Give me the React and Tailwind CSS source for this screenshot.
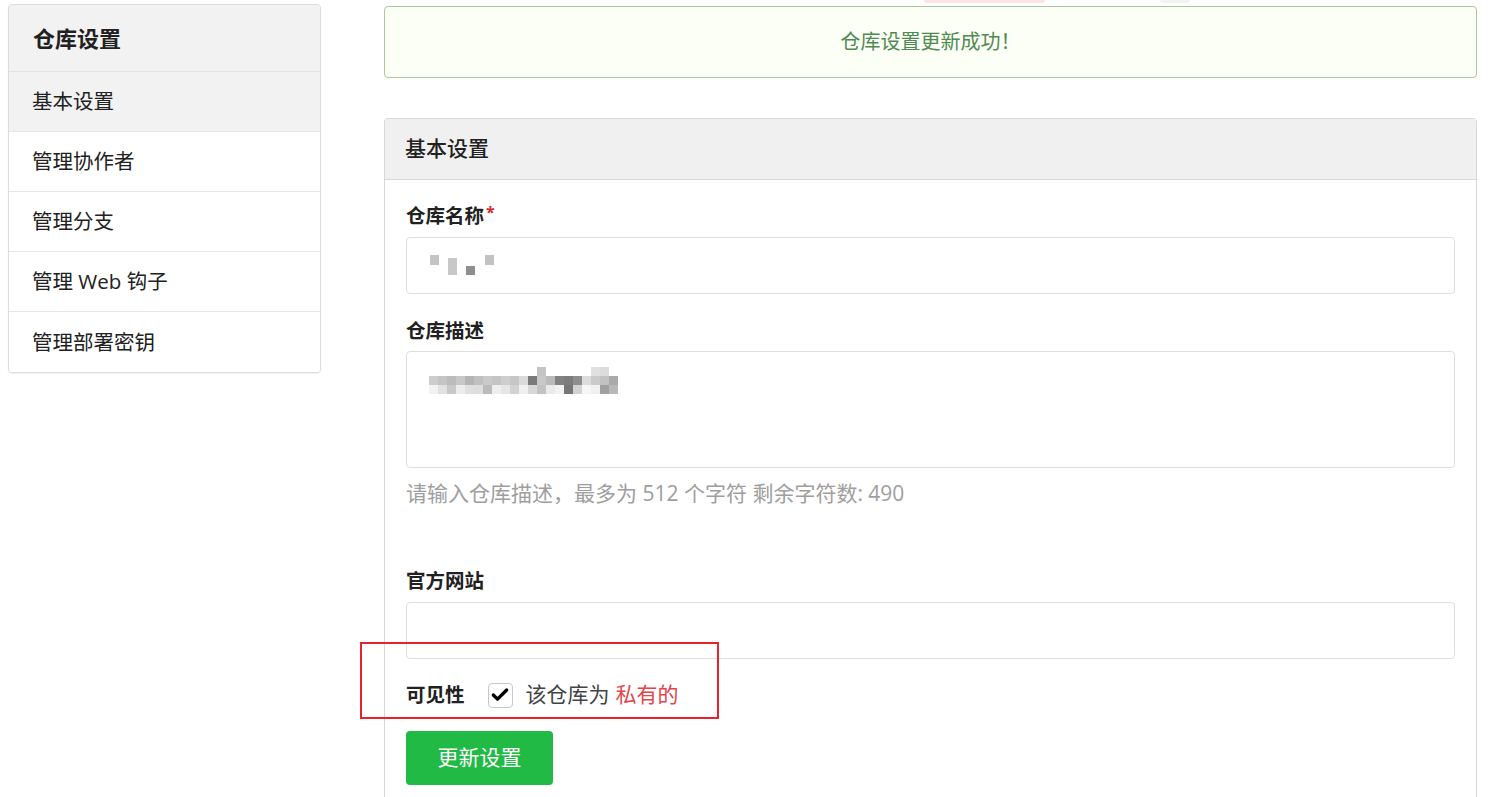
import { Check } from 'lucide-react';

const font = "font-['Open_Sans','Noto_Sans_CJK_SC',sans-serif]";

const navItems = ['基本设置', '管理协作者', '管理分支', '管理 Web 钩子', '管理部署密钥'];

// blurred (mosaic) text inside the description box, 9px cells
const descRows = [
  ['', '', '', '', '', '', '', '', '', '', '', '', 'c4', '', '', '', '', '', 'e0', 'dc', ''],
  ['cdcdcd', 'c4c4c4', 'bcbcbc', 'c8c8c8', 'b4b4b4', 'c0c0c0', 'cacaca', 'c4c4c4', 'cecece', 'c6c6c6', 'dadada', '7a7a7a', 'c8c8c8', 'bababa', '828282', '7c7c7c', '8e8e8e', 'dcdcdc', 'cacaca', 'c2c2c2', 'aaaaaa'],
  ['f2f2f2', 'e2e2e2', 'c8c8c8', 'ececec', 'e0e0e0', 'dedede', 'bababa', 'eeeeee', 'e6e6e6', 'd2d2d2', 'f0f0f0', 'd8d8d8', 'c2c2c2', 'eaeaea', 'f2f2f2', '767676', 'd2d2d2', 'f6f6f6', 'f0f0f0', 'a0a0a0', 'b8b8b8'],
];

function Mosaic({ rows }) {
  return (
    <div className="flex flex-col">
      {rows.map((row, i) => (
        <div key={i} className="flex">
          {row.map((c, j) => (
            <div
              key={j}
              className="w-[9px] h-[9px]"
              style={{ backgroundColor: c ? '#' + (c.length === 2 ? c + c + c : c) : 'transparent' }}
            />
          ))}
        </div>
      ))}
    </div>
  );
}

function NameMosaic() {
  return (
    <div className="relative w-[70px] h-[21px]">
      <div className="absolute left-0 top-0 w-[9px] h-[10px] bg-[#c4c4c4]" />
      <div className="absolute left-[18px] top-[3px] w-[9px] h-[17px] bg-[#c8c8c8]" />
      <div className="absolute left-[36px] top-[11px] w-[9px] h-[9px] bg-[#8e8e8e]" />
      <div className="absolute left-[55px] top-0 w-[9px] h-[10px] bg-[#c2c2c2]" />
    </div>
  );
}

export default function App() {
  return (
    <div className={`min-h-screen bg-white text-[#212121] ${font}`}>
      <div className="flex items-start pl-[8px]">
        {/* sidebar */}
        <div className="mt-[4px] w-[313px] shrink-0 rounded-[4px] border border-[#dcdcdd] bg-white shadow-[0_1px_2px_rgba(0,0,0,0.06)] overflow-hidden">
          <div className="h-[67px] flex items-center pl-[24px] bg-[#f2f2f2] border-b border-[#e2e2e2] text-[22px] font-bold">
            仓库设置
          </div>
          {navItems.map((item, i) => (
            <div
              key={item}
              className={`h-[60px] flex items-center pl-[23px] text-[20.5px] ${i === 0 ? 'bg-[#f2f2f2]' : 'bg-white'} ${i < navItems.length - 1 ? 'border-b border-[#e6e6e6]' : ''}`}
            >
              {item}
            </div>
          ))}
        </div>

        {/* main */}
        <div className="ml-[63px] w-[1093px] shrink-0">
          <div className="flex h-[3px]">
            <div className="ml-[540px] w-[121px] h-[3px] bg-[#fde4de] rounded-b-[3px]" />
            <div className="ml-[115px] w-[30px] h-[3px] bg-[#f2f2f2] rounded-b-full" />
          </div>
          <div className="mt-[3px] h-[72px] rounded-[4px] border border-[#a9c99b] bg-[#fcfff5] flex items-center justify-center text-[20px] text-[#4f8a51]">
            仓库设置更新成功！
          </div>

          <div className="mt-[40px] rounded-t-[4px] border border-b-0 border-[#d8d8d9] bg-white">
            <div className="h-[61px] flex items-center pl-[20px] bg-[#f0f0f0] border-b border-[#d8d8d9] text-[21px] font-medium">
              基本设置
            </div>
            <div className="px-[21px] pt-[24px] pb-[20px]">
              <div className="h-[24px] flex items-center text-[19.5px] font-bold leading-[24px]">
                仓库名称<span className="text-[#db2828] text-[16px] self-start -mt-[4px] ml-[2px]">*</span>
              </div>
              <div className="mt-[9px] h-[57px] rounded-[4px] border border-[#dedede] flex items-center pl-[23px]">
                <NameMosaic />
              </div>

              <div className="mt-[25px] h-[24px] flex items-center text-[19.5px] font-bold">仓库描述</div>
              <div className="mt-[8px] h-[117px] rounded-[4px] border border-[#dedede] pl-[22px] pt-[15px]">
                <Mosaic rows={descRows} />
              </div>
              <div className="mt-[14px] h-[24px] flex items-center text-[21px] text-[#9e9e9e]">
                请输入仓库描述，最多为 512 个字符 剩余字符数: 490
              </div>

              <div className="mt-[63px] h-[24px] flex items-center text-[19.5px] font-bold">官方网站</div>
              <div className="mt-[9px] h-[57px] rounded-[4px] border border-[#dedede]" />

              <div className="mt-[24px] h-[24px] flex items-center">
                <span className="text-[19.5px] font-bold">可见性</span>
                <span className="ml-[23px] w-[25px] h-[25px] rounded-[4px] border border-[#c8c8c9] flex items-center justify-center">
                  <Check className="w-[20px] h-[20px] text-black" strokeWidth={4} />
                </span>
                <span className="ml-[13px] text-[21px] text-[#444]">该仓库为</span>
                <span className="ml-[6px] text-[21px] text-[#e0464a]">私有的</span>
              </div>

              <button className="mt-[24px] h-[54px] w-[147px] rounded-[4px] bg-[#21ba45] text-white text-[21px] font-normal flex items-center justify-center">
                更新设置
              </button>
            </div>
          </div>
        </div>
      </div>

      {/* annotation box drawn over the screenshot */}
      <div className="absolute left-[360px] top-[642px] w-[359px] h-[77px] border-2 border-[#e8222b] pointer-events-none" />
    </div>
  );
}
